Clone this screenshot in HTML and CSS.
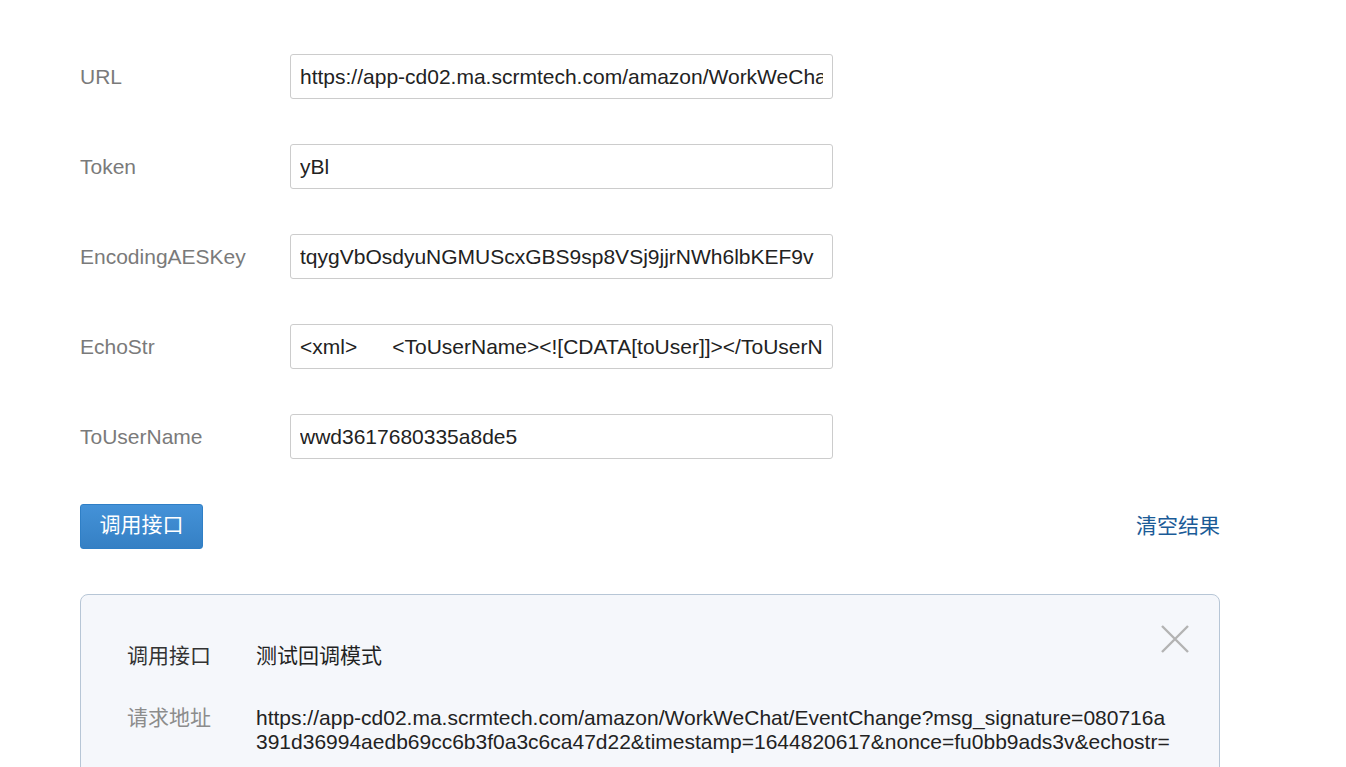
FILE: index.html
```html
<!DOCTYPE html>
<html lang="zh-CN">
<head>
  <meta charset="UTF-8" />
  <title>回调模式测试</title>
  <link rel="stylesheet" href="styles.css">
</head>
<body>
  <div class="page">
    <div class="form">
      <div class="form-row">
        <label class="form-label">URL</label>
        <input class="form-input" type="text" value="https://app-cd02.ma.scrmtech.com/amazon/WorkWeChat/EventChange" />
      </div>
      <div class="form-row">
        <label class="form-label">Token</label>
        <input class="form-input" type="text" value="yBl" />
      </div>
      <div class="form-row">
        <label class="form-label">EncodingAESKey</label>
        <input class="form-input" type="text" value="tqygVbOsdyuNGMUScxGBS9sp8VSj9jjrNWh6lbKEF9v" />
      </div>
      <div class="form-row">
        <label class="form-label">EchoStr</label>
        <input class="form-input" type="text" value="<xml>      <ToUserName><![CDATA[toUser]]></ToUserName>" />
      </div>
      <div class="form-row">
        <label class="form-label">ToUserName</label>
        <input class="form-input" type="text" value="wwd3617680335a8de5" />
      </div>
    </div>

    <div class="actions">
      <button class="btn-call">调用接口</button>
      <a class="link-clear" href="#">清空结果</a>
    </div>

    <div class="result">
      <span class="result-close">
        <svg viewBox="0 0 28 28" width="28" height="28">
          <path d="M1 1L27 27M27 1L1 27" stroke="#b3b3b3" stroke-width="2.4" fill="none"/>
        </svg>
      </span>
      <div class="result-row">
        <span class="result-label dark">调用接口</span>
        <span class="result-value">测试回调模式</span>
      </div>
      <div class="result-row">
        <span class="result-label">请求地址</span>
        <span class="result-value">https://app-cd02.ma.scrmtech.com/amazon/WorkWeChat/EventChange?msg_signature=080716a391d36994aedb69cc6b3f0a3c6ca47d22&amp;timestamp=1644820617&amp;nonce=fu0bb9ads3v&amp;echostr=</span>
      </div>
    </div>
  </div>
</body>
</html>
```

FILE: styles.css
```css
html, body {
  margin: 0;
  padding: 0;
  background: #fff;
  font-family: 'Liberation Sans', Arial, 'Noto Sans CJK SC', sans-serif;
  font-size: 21px;
  color: #222;
}
.page {
  width: 1140px;
  padding: 54px 0 0 80px;
}
.form-row {
  display: flex;
  align-items: center;
  height: 45px;
  margin-bottom: 45px;
}
.form-label {
  width: 210px;
  color: #7a7a7a;
  flex-shrink: 0;
}
.form-input {
  box-sizing: border-box;
  width: 543px;
  height: 45px;
  border: 1px solid #cccccc;
  border-radius: 3px;
  padding: 0 9px;
  font-family: inherit;
  font-size: 21px;
  color: #222;
  outline: none;
}
.actions {
  display: flex;
  align-items: center;
  justify-content: space-between;
  height: 45px;
  margin-bottom: 45px;
}
.btn-call {
  box-sizing: border-box;
  width: 123px;
  height: 45px;
  border: 1px solid #2f7fc6;
  border-radius: 3px;
  background: linear-gradient(#4492d8, #3580c4);
  color: #fff;
  font-family: inherit;
  font-size: 21px;
  line-height: 1;
  padding: 0 0 5px 0;
}
.link-clear {
  color: #1b5b97;
  text-decoration: none;
  line-height: 24px;
  padding-bottom: 2px;
}
.result {
  position: relative;
  border: 1px solid #b7c6d6;
  border-radius: 8px;
  background: #f5f7fb;
  padding: 49px 46px 40px 46px;
}
.result-close {
  position: absolute;
  top: 30px;
  right: 30px;
  width: 28px;
  height: 28px;
}
.result-close svg {
  display: block;
}
.result-row {
  display: flex;
  line-height: 24px;
  margin-bottom: 38px;
}
.result-label {
  width: 129px;
  flex-shrink: 0;
  color: #8c8c8c;
}
.result-label.dark {
  color: #333;
}
.result-value {
  flex: 1;
  color: #222;
  word-break: break-all;
}
```
